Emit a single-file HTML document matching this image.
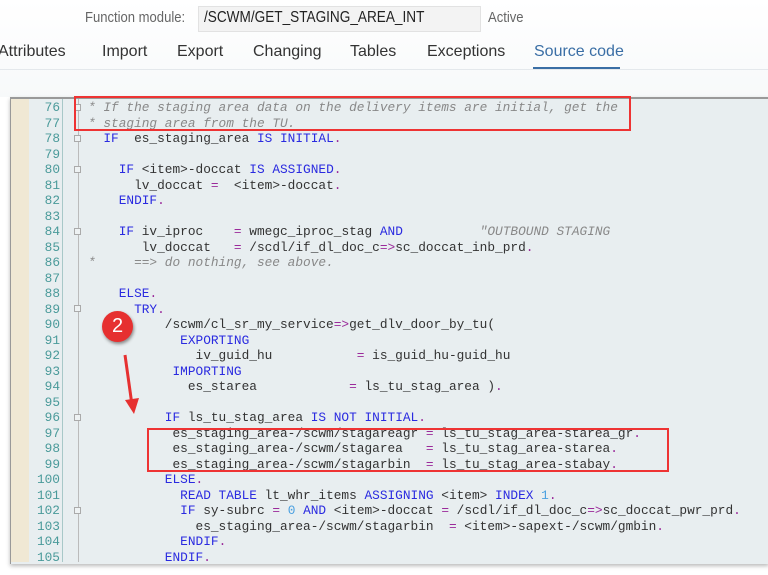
<!DOCTYPE html>
<html><head><meta charset="utf-8"><style>
body{margin:0;width:768px;height:575px;overflow:hidden;background:#fff;font-family:"Liberation Sans",sans-serif;position:relative}
.hdr{position:absolute;left:0;top:0;width:768px;height:97px;background:linear-gradient(#fff,#f7f9fa)}
.lbl{position:absolute;left:85px;top:10px;font-size:14.5px;color:#666;transform:scaleX(0.9);transform-origin:left}
.inp{position:absolute;left:198px;top:6px;width:283px;height:26px;background:#f3f3f3;border:1px solid #e2e2e2;box-sizing:border-box}
.inpt{position:absolute;left:204px;top:9px;font-size:16px;color:#222;transform:scaleX(0.85);transform-origin:left}
.act{position:absolute;left:488px;top:10px;font-size:14.5px;color:#666;transform:scaleX(0.9);transform-origin:left}
.tab{position:absolute;top:43px;font-size:16px;color:#333}
.line{position:absolute;left:0;top:69px;width:768px;height:1px;background:#e4e8ec}
.ul{position:absolute;left:533px;top:67px;width:87px;height:2px;background:#3a6ea5}
.panel{position:absolute;left:10px;top:97px;width:758px;height:465px;background:#e8eef0;border-top:2px solid #999;border-left:1px solid #999;box-shadow:0 2px 4px #bbb}
.beige{position:absolute;left:11px;top:99px;width:18px;height:463px;background:#f0e8d4}
.nums{position:absolute;left:29px;top:99px;width:33px;height:463px;background:#e8eef0;border-right:1px solid #a8c8c8}
.fold{position:absolute;left:78px;top:99px;width:1px;height:463px;background:#bbb}
.fb{position:absolute;left:74px;width:7px;height:7px;border:1px solid #aaa;background:#eef2f3;box-sizing:border-box}
pre{margin:0;position:absolute;font-family:"Liberation Mono",monospace;font-size:12.8px;line-height:15.5px;color:#333}
#n{left:30px;top:100px;width:30px;text-align:right;color:#4a9a9a}
#c{left:88px;top:100px}
.k{color:#2a2ae0}.p{color:#9a2a9a}.cm{color:#888;font-style:italic}.nm{color:#4aa0e0}
.box{position:absolute;border:2px solid #e33;box-sizing:border-box}
.circ{position:absolute;left:102px;top:311px;width:31px;height:31px;border-radius:50%;background:#e63030;color:#fff;font-size:20px;text-align:center;line-height:31px;box-shadow:1px 2px 3px #888}
</style></head><body>
<div class="hdr"></div>
<div class="lbl">Function module:</div>
<div class="inp"></div><div class="inpt">/SCWM/GET_STAGING_AREA_INT</div>
<div class="act">Active</div>
<div class="tab" style="left:-2px">Attributes</div>
<div class="tab" style="left:102px">Import</div>
<div class="tab" style="left:177px">Export</div>
<div class="tab" style="left:253px">Changing</div>
<div class="tab" style="left:350px">Tables</div>
<div class="tab" style="left:427px">Exceptions</div>
<div class="tab" style="left:534px;color:#3a6ea5">Source code</div>
<div class="line"></div><div class="ul"></div>
<div class="panel"></div><div class="beige"></div><div class="nums"></div><div class="fold"></div>
<div class="fb" style="top:104px"></div>
<div class="fb" style="top:135px"></div>
<div class="fb" style="top:166px"></div>
<div class="fb" style="top:228px"></div>
<div class="fb" style="top:305px"></div>
<div class="fb" style="top:414px"></div>
<div class="fb" style="top:507px"></div>
<pre id="n">76
77
78
79
80
81
82
83
84
85
86
87
88
89
90
91
92
93
94
95
96
97
98
99
100
101
102
103
104
105</pre>
<pre id="c"><span class="cm">* If the staging area data on the delivery items are initial, get the</span>
<span class="cm">* staging area from the TU.</span>
  <span class="k">IF</span>  es_staging_area <span class="k">IS INITIAL</span><span class="p">.</span>

    <span class="k">IF</span> &lt;item&gt;-doccat <span class="k">IS ASSIGNED</span><span class="p">.</span>
      lv_doccat <span class="p">=</span>  &lt;item&gt;-doccat<span class="p">.</span>
    <span class="k">ENDIF</span><span class="p">.</span>

    <span class="k">IF</span> iv_iproc    <span class="p">=</span> wmegc_iproc_stag <span class="k">AND</span>          <span class="cm">"OUTBOUND STAGING</span>
       lv_doccat   <span class="p">=</span> /scdl/if_dl_doc_c<span class="p">=&gt;</span>sc_doccat_inb_prd<span class="p">.</span>
<span class="cm">*     ==&gt; do nothing, see above.</span>

    <span class="k">ELSE</span><span class="p">.</span>
      <span class="k">TRY</span><span class="p">.</span>
          /scwm/cl_sr_my_service<span class="p">=&gt;</span>get_dlv_door_by_tu(
            <span class="k">EXPORTING</span>
              iv_guid_hu           <span class="p">=</span> is_guid_hu-guid_hu
           <span class="k">IMPORTING</span>
             es_starea            <span class="p">=</span> ls_tu_stag_area )<span class="p">.</span>

          <span class="k">IF</span> ls_tu_stag_area <span class="k">IS NOT INITIAL</span><span class="p">.</span>
           es_staging_area-/scwm/stagareagr <span class="p">=</span> ls_tu_stag_area-starea_gr<span class="p">.</span>
           es_staging_area-/scwm/stagarea   <span class="p">=</span> ls_tu_stag_area-starea<span class="p">.</span>
           es_staging_area-/scwm/stagarbin  <span class="p">=</span> ls_tu_stag_area-stabay<span class="p">.</span>
          <span class="k">ELSE</span><span class="p">.</span>
            <span class="k">READ TABLE</span> lt_whr_items <span class="k">ASSIGNING</span> &lt;item&gt; <span class="k">INDEX</span> <span class="nm">1</span><span class="p">.</span>
            <span class="k">IF</span> sy-subrc <span class="p">=</span> <span class="nm">0</span> <span class="k">AND</span> &lt;item&gt;-doccat <span class="p">=</span> /scdl/if_dl_doc_c<span class="p">=&gt;</span>sc_doccat_pwr_prd<span class="p">.</span>
              es_staging_area-/scwm/stagarbin  <span class="p">=</span> &lt;item&gt;-sapext-/scwm/gmbin<span class="p">.</span>
            <span class="k">ENDIF</span><span class="p">.</span>
          <span class="k">ENDIF</span><span class="p">.</span></pre>
<div class="box" style="left:74px;top:96px;width:557px;height:35px"></div>
<div class="box" style="left:147px;top:428px;width:522px;height:44px"></div>
<div class="circ">2</div>
<svg style="position:absolute;left:115px;top:350px" width="30" height="70"><line x1="10" y1="5" x2="17" y2="55" stroke="#e63030" stroke-width="3"/><polygon points="10,50 24,48 19,64" fill="#e63030"/></svg>
</body></html>
